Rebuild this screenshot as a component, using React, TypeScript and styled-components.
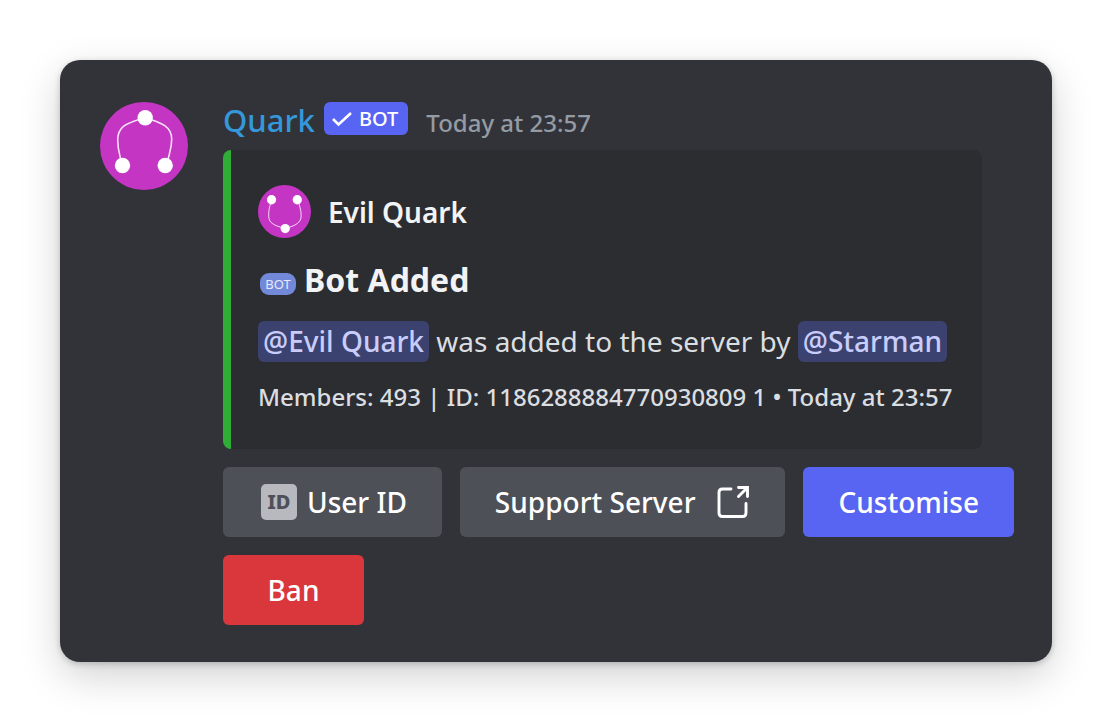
import React from "react";
import styled, { createGlobalStyle } from "styled-components";

const GlobalStyle = createGlobalStyle`
  *, *::before, *::after { box-sizing: border-box; }
  body {
    margin: 0;
    background: #ffffff;
    color: #dbdee1;
    font-family: "Noto Sans", "Open Sans", sans-serif;
    -webkit-font-smoothing: antialiased;
  }
`;

const Page = styled.main`
  padding: 60px;
`;

const Card = styled.article`
  display: flex;
  align-items: flex-start;
  gap: 35px;
  padding: 42px 36px 37px 40px;
  border-radius: 20px;
  background: #323338;
  box-shadow: 0 2px 6px rgba(0, 0, 0, 0.2), 0 14px 40px rgba(0, 0, 0, 0.18);
`;

const AvatarSvg = styled.svg<{ $size: number }>`
  display: block;
  flex: none;
  width: ${(p) => p.$size}px;
  height: ${(p) => p.$size}px;
`;

const Content = styled.div`
  flex: 1;
  min-width: 0;
`;

const Header = styled.header`
  display: flex;
  align-items: baseline;
  min-height: 48px;
`;

const Username = styled.span`
  color: #3498db;
  font-size: 31px;
  font-weight: 500;
  line-height: 36px;
`;

const VerifiedTag = styled.span`
  display: flex;
  align-items: center;
  align-self: flex-start;
  gap: 7px;
  height: 33px;
  margin: 0 18px 0 9px;
  padding: 0 10px 0 8px;
  border-radius: 6px;
  background: #5865f2;
  color: #ffffff;
  font-size: 20px;
  font-weight: 500;
  line-height: 33px;
`;

const Timestamp = styled.time`
  color: #949ba4;
  font-size: 24px;
  font-weight: 500;
  line-height: 34px;
`;

const Embed = styled.section`
  max-width: 759px;
  padding: 35px 27px;
  border-left: 8px solid #30ad37;
  border-radius: 8px;
  background: #2b2d31;
`;

const Author = styled.div`
  display: flex;
  align-items: center;
  gap: 17px;
  color: #f2f3f5;
  font-size: 28px;
  font-weight: 600;
`;

const Title = styled.h2`
  display: flex;
  align-items: center;
  gap: 8px;
  margin: 20px 0 19px;
  color: #f2f3f5;
  font-size: 32px;
  font-weight: 700;
  line-height: 44px;
`;

const BotPill = styled.span`
  width: 36px;
  height: 22px;
  margin: 7px 0 0 2px;
  border-radius: 9px;
  background: #7289da;
  color: #e6eafa;
  font-size: 13px;
  font-weight: 400;
  line-height: 22px;
  text-align: center;
`;

const Description = styled.p`
  margin: 0 0 18px;
  font-size: 28px;
  line-height: 41px;
`;

const Mention = styled.a`
  display: inline-block;
  padding: 0 5px;
  border-radius: 6px;
  background: #3c4270;
  color: #c9cdfb;
  font-weight: 500;
  text-decoration: none;
`;

const Footer = styled.footer`
  font-size: 24px;
  font-weight: 500;
  line-height: 34px;
`;

const Actions = styled.div`
  display: flex;
  flex-wrap: wrap;
  gap: 18px;
  margin-top: 18px;
`;

const tones = { grey: "#4e5058", blurple: "#5865f2", red: "#da373c" };

const Button = styled.button<{ $tone: keyof typeof tones; $gap?: number }>`
  display: inline-flex;
  align-items: center;
  justify-content: center;
  gap: ${(p) => p.$gap ?? 0}px;
  min-width: 141px;
  height: 70px;
  padding: 0 35px;
  border: 0;
  border-radius: 6px;
  background: ${(p) => tones[p.$tone]};
  color: #ffffff;
  font-family: inherit;
  font-size: 28px;
  font-weight: 500;
  line-height: 40px;
  text-decoration: none;
  cursor: pointer;
`;

const IdEmoji = styled.span`
  width: 36px;
  height: 36px;
  margin: 0 3px;
  border-radius: 5px;
  background: #b8b9be;
  color: #4e5058;
  font-size: 20px;
  font-weight: 800;
  line-height: 35px;
  text-align: center;
`;

const Icon = styled.svg`
  display: block;
  flex: none;
`;

function Avatar({ size, flipped, lineWidth }: { size: number; flipped?: boolean; lineWidth: number }) {
  return (
    <AvatarSvg $size={size} viewBox="0 0 88 88" aria-hidden="true">
      <circle cx="44" cy="44" r="44" fill="#c535c4" />
      <g transform={flipped ? "matrix(1 0 0 -1 0 88)" : undefined}>
        <path
          d="M22 63C20.500 54 17.700 50 17.700 38C17.700 25.500 24 21.500 45 15.700C62 20.500 71.700 25 71.700 37C71.700 48 68.500 52 67 63"
          fill="none"
          stroke="#ffffff"
          strokeOpacity="0.85"
          strokeWidth={lineWidth}
        />
        <circle cx="45.200" cy="15.700" r="7.700" fill="#ffffff" />
        <circle cx="22.500" cy="63.500" r="7.700" fill="#ffffff" />
        <circle cx="65.200" cy="63.500" r="7.700" fill="#ffffff" />
      </g>
    </AvatarSvg>
  );
}

export default function App() {
  return (
    <>
      <GlobalStyle />
      <Page>
        <Card>
          <Avatar size={88} lineWidth={1.6} />
          <Content>
            <Header>
              <Username>Quark</Username>
              <VerifiedTag>
                <Icon width="20" height="16" viewBox="0 0 20 16" aria-hidden="true">
                  <path d="M1 8L6.500 13.500L19 2" fill="none" stroke="#ffffff" strokeWidth="2.600" />
                </Icon>
                BOT
              </VerifiedTag>
              <Timestamp>Today at 23:57</Timestamp>
            </Header>

            <Embed>
              <Author>
                <Avatar size={53} flipped lineWidth={1.6} />
                Evil Quark
              </Author>
              <Title>
                <BotPill>BOT</BotPill>
                Bot Added
              </Title>
              <Description>
                <Mention href="#evil-quark">@Evil Quark</Mention> was added to the server by{" "}
                <Mention href="#starman">@Starman</Mention>
              </Description>
              <Footer>Members: 493 | ID: 1186288884770930809 1 • Today at 23:57</Footer>
            </Embed>

            <Actions>
              <Button type="button" $tone="grey" $gap={7}>
                <IdEmoji aria-hidden="true">ID</IdEmoji>
                User ID
              </Button>
              <Button as="a" href="#support" $tone="grey" $gap={21}>
                Support Server
                <Icon width="34" height="36" viewBox="0 0 34 36" aria-hidden="true">
                  <path
                    d="M15 5H6.500Q3 5 3 8.500V29Q3 32.500 6.500 32.500H26.500Q30 32.500 30 29V19.500"
                    fill="none"
                    stroke="#ffffff"
                    strokeWidth="2.900"
                    strokeLinecap="round"
                  />
                  <path
                    d="M22.500 3.500H31.500V12.500M31 4L22.500 12.500"
                    fill="none"
                    stroke="#ffffff"
                    strokeWidth="2.900"
                    strokeLinecap="round"
                  />
                </Icon>
              </Button>
              <Button type="button" $tone="blurple">Customise</Button>
              <Button type="button" $tone="red">Ban</Button>
            </Actions>
          </Content>
        </Card>
      </Page>
    </>
  );
}
